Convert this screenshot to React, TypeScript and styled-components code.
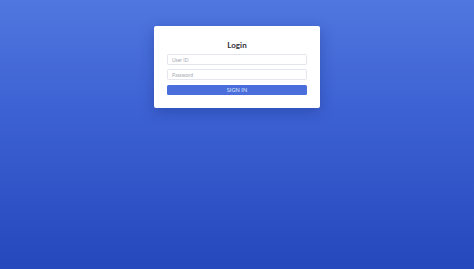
import React from 'react';
import styled, { createGlobalStyle } from 'styled-components';

const GlobalStyle = createGlobalStyle`
  html, body {
    margin: 0;
    padding: 0;
  }
  body {
    font-family: 'Lato', 'Noto Sans', sans-serif;
  }
`;

const Page = styled.div`
  width: 100%;
  height: 100vh;
  min-height: 269px;
  display: flex;
  flex-flow: column;
  align-items: center;
  padding-top: 26px;
  box-sizing: border-box;
  background: linear-gradient(180deg, #5077df 0%, #3d62d3 40%, #2549bd 100%);
`;

const Card = styled.form`
  width: 166px;
  box-sizing: border-box;
  padding: 14px 13px 13px;
  background: #ffffff;
  border-radius: 2px;
  box-shadow: 0 4px 14px rgba(20, 40, 120, 0.35);
  display: flex;
  flex-flow: column;
`;

const Title = styled.h1`
  margin: 0 0 4px;
  font-size: 8px;
  line-height: 10px;
  font-weight: 700;
  text-align: center;
  color: #333333;
`;

const Input = styled.input`
  height: 11px;
  box-sizing: border-box;
  margin-bottom: 4px;
  padding: 0 4px;
  border: 1px solid #e3e6ec;
  border-radius: 1.5px;
  font-family: inherit;
  font-size: 5px;
  color: #333;
  outline: none;

  &::placeholder {
    color: #a5a9b2;
  }
`;

const Button = styled.button`
  height: 10px;
  margin-top: 1px;
  padding: 0;
  border: none;
  border-radius: 1.5px;
  background: #4a6fdc;
  color: #dfe6fa;
  font-family: inherit;
  font-size: 5.5px;
  letter-spacing: 0.1px;
  cursor: pointer;
`;

function App(): JSX.Element {
  return (
    <>
      <GlobalStyle />
      <Page>
        <Card onSubmit={(e) => e.preventDefault()}>
          <Title>Login</Title>
          <Input type="text" placeholder="User ID" />
          <Input type="password" placeholder="Password" />
          <Button type="submit">SIGN IN</Button>
        </Card>
      </Page>
    </>
  );
}

export default App;
